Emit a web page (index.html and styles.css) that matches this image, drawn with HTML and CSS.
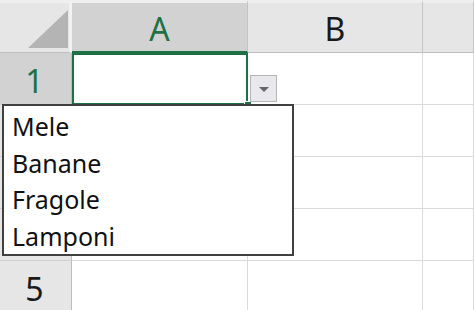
FILE: index.html
```html
<!DOCTYPE html>
<html lang="it">
<head>
    <meta charset="UTF-8">
    <meta name="viewport" content="width=device-width, initial-scale=1.0">
    <title>Elenco a discesa</title>
    <link rel="stylesheet" href="styles.css">
</head>
<body>
    <div class="sheet-wrapper">
        <div class="sheet">
            <!-- Intestazioni -->
            <div class="corner"><span class="corner-tri"></span></div>
            <div class="col-head selected">A</div>
            <div class="col-head">B</div>
            <div class="col-head"></div>

            <div class="row-head selected">1</div>
            <div class="cell active"></div>
            <div class="cell"></div>
            <div class="cell"></div>

            <!-- Righe 2-4: coperte dall'elenco -->
            <div class="row-head"></div>
            <div class="cell"></div>
            <div class="cell"></div>
            <div class="cell"></div>

            <div class="row-head"></div>
            <div class="cell"></div>
            <div class="cell"></div>
            <div class="cell"></div>

            <div class="row-head"></div>
            <div class="cell"></div>
            <div class="cell"></div>
            <div class="cell"></div>

            <div class="row-head">5</div>
            <div class="cell"></div>
            <div class="cell"></div>
            <div class="cell"></div>
        </div>

        <!-- Quadratino di riempimento e pulsante del menu -->
        <span class="fill-handle"></span>
        <button class="dropdown-btn"><span class="arrow"></span></button>

        <ul class="dropdown-list">
            <li>Mele</li>
            <li>Banane</li>
            <li>Fragole</li>
            <li>Lamponi</li>
        </ul>
    </div>
</body>
</html>
```

FILE: styles.css
```css
/* Stili generali */
body {
    margin: 0;
    padding: 0;
    background-color: #fff;
    font-family: "Noto Sans", "Open Sans", Arial, sans-serif;
    color: #1a1a1a;
    overflow: hidden;
}

.sheet-wrapper {
    position: relative;
    width: 474px;
    height: 310px;
}

.sheet {
    display: grid;
    grid-template-columns: 72px 176px 175px 1fr;
    grid-template-rows: 53px repeat(5, 52px);
}

/* Intestazioni di colonna e riga */
.corner, .col-head, .row-head {
    background-color: #e6e6e6;
    box-sizing: border-box;
    font-size: 32px;
    display: flex;
    align-items: center;
    justify-content: center;
}

.corner {
    position: relative;
    border-top: 3px solid #efefef;
    border-right: 3px solid #f2f2f2;
    border-bottom: 1px solid #bdbdbd;
}

.corner-tri {
    position: absolute;
    right: 1px;
    bottom: 4px;
    width: 40px;
    height: 38px;
    background-color: #b4b4b4;
    clip-path: polygon(100% 0, 100% 100%, 0 100%);
}

.col-head {
    border-top: 3px solid #efefef;
    border-right: 1px solid #c4c4c4;
    border-bottom: 1px solid #bdbdbd;
    padding-top: 2px;
}

.col-head.selected {
    background-color: #d2d2d2;
    color: #1e7145;
    border-bottom: 2px solid #1e7145;
}

.row-head {
    border-right: 1px solid #bdbdbd;
    border-bottom: 1px solid #cfcfcf;
    padding-top: 4px;
    padding-right: 2px;
}

.row-head.selected {
    background-color: #d2d2d2;
    color: #1e7145;
}

/* Celle */
.cell {
    box-sizing: border-box;
    border-right: 1px solid #dadada;
    border-bottom: 1px solid #dadada;
}

.cell.active {
    box-shadow: inset 0 0 0 2px #1e7145;
    border: none;
}

.fill-handle {
    position: absolute;
    left: 244px;
    top: 101px;
    width: 6px;
    height: 6px;
    background-color: #1e7145;
    border: 1px solid #fff;
}

/* Pulsante del menu a discesa */
.dropdown-btn {
    position: absolute;
    left: 250px;
    top: 75px;
    width: 27px;
    height: 27px;
    padding: 0;
    margin: 0;
    background-color: #e9e9ed;
    border: 1px solid #b5b5b5;
    border-radius: 0;
    display: flex;
    align-items: center;
    justify-content: center;
}

.arrow {
    width: 0;
    height: 0;
    border-left: 5px solid transparent;
    border-right: 5px solid transparent;
    border-top: 5px solid #666;
    margin-top: 1px;
}

/* Elenco */
.dropdown-list {
    position: absolute;
    left: 2px;
    top: 104px;
    width: 292px;
    height: 152px;
    box-sizing: border-box;
    margin: 0;
    padding: 2px 0 0 8px;
    list-style: none;
    background-color: #fff;
    border: 2px solid #404040;
    font-size: 25px;
    line-height: 36.5px;
    color: #111;
}
```
